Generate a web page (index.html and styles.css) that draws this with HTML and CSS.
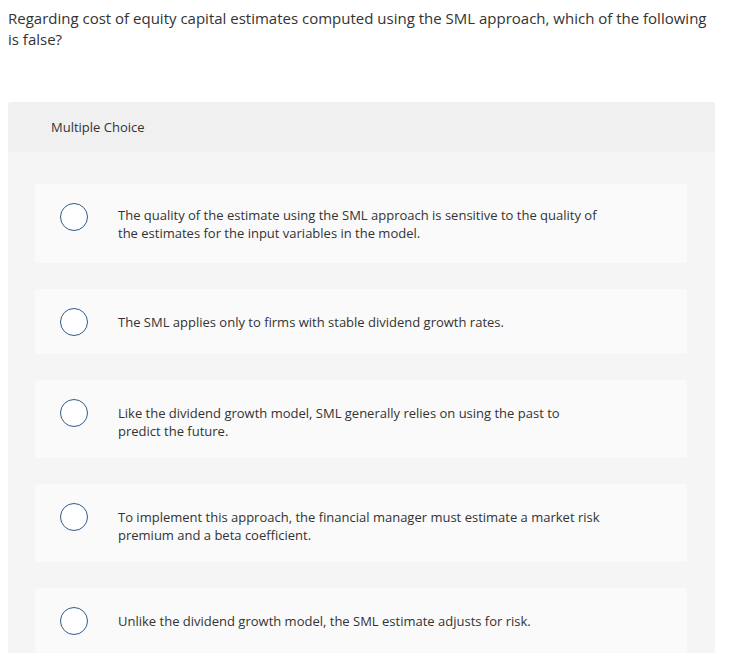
FILE: index.html
```html
<!DOCTYPE html>
<html>
<head>
<meta charset="utf-8">
<link rel="stylesheet" href="styles.css">
</head>
<body>
<p class="question">Regarding cost of equity capital estimates computed using the SML approach, which of the following is false?</p>
<div class="panel">
  <div class="panel-head">Multiple Choice</div>
  <div class="panel-body">
    <div class="option"><span class="radio"></span><span class="label">The quality of the estimate using the SML approach is sensitive to the quality of the estimates for the input variables in the model.</span></div>
    <div class="option"><span class="radio"></span><span class="label">The SML applies only to firms with stable dividend growth rates.</span></div>
    <div class="option"><span class="radio"></span><span class="label">Like the dividend growth model, SML generally relies on using the past to predict the future.</span></div>
    <div class="option"><span class="radio"></span><span class="label">To implement this approach, the financial manager must estimate a market risk premium and a beta coefficient.</span></div>
    <div class="option"><span class="radio"></span><span class="label">Unlike the dividend growth model, the SML estimate adjusts for risk.</span></div>
  </div>
</div>
</body>
</html>
```
FILE: styles.css
```css
body {
  margin: 8px;
  font-family: "Open Sans", "Noto Sans", sans-serif;
  color: #333;
  background: #fff;
}
.question {
  margin: 0 0 52px 0;
  font-size: 15px;
  line-height: 21px;
  width: 712px;
}
.panel {
  width: 707px;
  background: #f5f5f5;
  border-radius: 3px 3px 0 0;
}
.panel-head {
  height: 50px;
  background: #f0f0f0;
  display: flex;
  align-items: center;
  padding-left: 43px;
  font-size: 13px;
  border-radius: 3px 3px 0 0;
}
.panel-body {
  padding: 32px 28px 30px 27px;
  display: flex;
  flex-direction: column;
  gap: 26px;
}
.option {
  background: #fafafa;
  border-radius: 3px;
  padding: 19px 25px 18px;
  display: flex;
  align-items: flex-start;
}
.radio {
  flex: none;
  box-sizing: border-box;
  width: 28px;
  height: 28px;
  border: 1.5px solid #2c5d8d;
  border-radius: 50%;
  background: #fff;
}
.label {
  margin: 3px 0 3px 30px;
  font-size: 13px;
  line-height: 18px;
  width: 485px;
}
.option:nth-child(n+2) .label {
  margin-top: 5px;
  margin-bottom: 0;
}
```
